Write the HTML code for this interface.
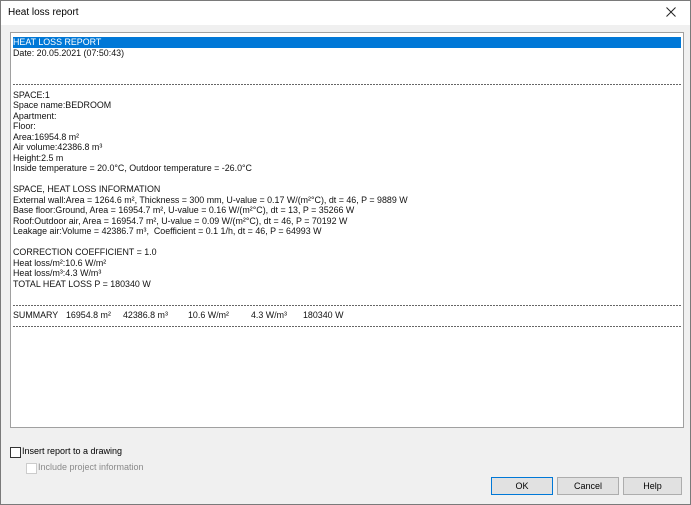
<!DOCTYPE html>
<html><head><style>
body{margin:0;width:691px;height:505px;overflow:hidden;font-family:"Liberation Sans",sans-serif;}
.win{position:absolute;left:0;top:0;width:689px;height:503px;border:1px solid #7a7a7a;background:#f0f0f0;}
.title{position:absolute;left:0;top:0;width:689px;height:24px;background:#fff;font-size:10px;line-height:24px;}
.title span{position:absolute;left:7px;top:0px;}
.x{position:absolute;right:14px;top:6px;}
.box{position:absolute;left:9px;top:31px;width:672px;height:394px;background:#fff;border:1px solid #a0a0a0;overflow:hidden;}
.txt{position:absolute;left:2px;top:4px;right:2px;font-size:8.9px;line-height:10.5px;color:#111;}
.txt div{height:10.5px;white-space:pre;position:relative;}
.txt span{position:absolute;top:0;}
.hl{background:#0078d7;color:#fff;}
.dash{background:linear-gradient(#fff 5px,transparent 5px,transparent 6px,#fff 6px),repeating-linear-gradient(90deg,#666 0 2px,#fff 2px 3px);}
.cb{position:absolute;width:9px;height:9px;border:1px solid #333;background:#fff;}
.lbl{position:absolute;font-size:9px;}
.btn{position:absolute;top:476px;height:16px;border:1px solid #adadad;background:#e1e1e1;font-size:9px;line-height:16px;text-align:center;}
</style></head><body>
<div class="win">
<div class="title"><span>Heat loss report</span>
<svg class="x" width="10" height="10" viewBox="0 0 10 10"><path d="M0.5 0.5L9.5 9.5M9.5 0.5L0.5 9.5" stroke="#222" stroke-width="1"/></svg></div>
<div class="box"><div class="txt"><div class="hl">HEAT LOSS REPORT</div><div>Date: 20.05.2021 (07:50:43)</div><div></div><div></div><div class="dash"></div><div>SPACE:1</div><div>Space name:BEDROOM</div><div>Apartment:</div><div>Floor:</div><div>Area:16954.8 m²</div><div>Air volume:42386.8 m³</div><div>Height:2.5 m</div><div>Inside temperature = 20.0°C, Outdoor temperature = -26.0°C</div><div></div><div>SPACE, HEAT LOSS INFORMATION</div><div>External wall:Area = 1264.6 m², Thickness = 300 mm, U-value = 0.17 W/(m²°C), dt = 46, P = 9889 W</div><div>Base floor:Ground, Area = 16954.7 m², U-value = 0.16 W/(m²°C), dt = 13, P = 35266 W</div><div>Roof:Outdoor air, Area = 16954.7 m², U-value = 0.09 W/(m²°C), dt = 46, P = 70192 W</div><div>Leakage air:Volume = 42386.7 m³,  Coefficient = 0.1 1/h, dt = 46, P = 64993 W</div><div></div><div>CORRECTION COEFFICIENT = 1.0</div><div>Heat loss/m²:10.6 W/m²</div><div>Heat loss/m³:4.3 W/m³</div><div>TOTAL HEAT LOSS P = 180340 W</div><div></div><div class="dash"></div><div><span style="left:0">SUMMARY</span><span style="left:53px">16954.8 m²</span><span style="left:110px">42386.8 m³</span><span style="left:175px">10.6 W/m²</span><span style="left:238px">4.3 W/m³</span><span style="left:290px">180340 W</span></div><div class="dash"></div></div></div>
<div class="cb" style="left:9px;top:446px"></div>
<div class="lbl" style="left:21px;top:445px">Insert report to a drawing</div>
<div class="cb" style="left:25px;top:462px;border-color:#ccc"></div>
<div class="lbl" style="left:37px;top:461px;color:#8a8a8a">Include project information</div>
<div class="btn" style="left:490px;width:60px;border:1px solid #0078d7;">OK</div>
<div class="btn" style="left:556px;width:60px;">Cancel</div>
<div class="btn" style="left:622px;width:57px;">Help</div>
</div>
</body></html>
